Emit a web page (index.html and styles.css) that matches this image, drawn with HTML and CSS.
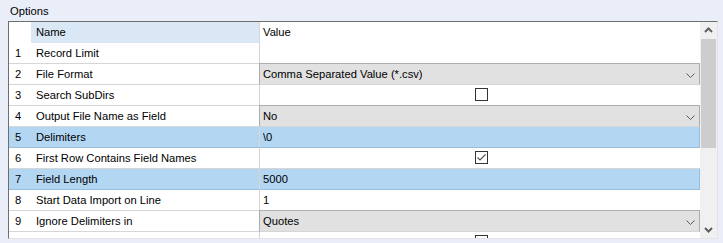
FILE: index.html
```html
<!DOCTYPE html>
<html lang="en">
<head>
    <meta charset="UTF-8">
    <title>Options</title>
    <link rel="stylesheet" href="styles.css">
</head>
<body>
<div class="panel">
    <div class="caption">Options</div>
    <div class="grid-box">
        <div class="grid">
            <div class="row head">
                <div class="num"></div>
                <div class="name">Name</div>
                <div class="value">Value</div>
            </div>
            <div class="row">
                <div class="num">1</div>
                <div class="name">Record Limit</div>
                <div class="value"></div>
            </div>
            <div class="row">
                <div class="num">2</div>
                <div class="name">File Format</div>
                <div class="value combo">Comma Separated Value (*.csv)<svg class="chev" width="9" height="5" viewBox="0 0 9 5"><polyline points="0.5,0.5 4.5,4.5 8.5,0.5" fill="none" stroke="#5a5a5a" stroke-width="1"/></svg></div>
            </div>
            <div class="row">
                <div class="num">3</div>
                <div class="name">Search SubDirs</div>
                <div class="value check"><span class="box"></span></div>
            </div>
            <div class="row">
                <div class="num">4</div>
                <div class="name">Output File Name as Field</div>
                <div class="value combo">No<svg class="chev" width="9" height="5" viewBox="0 0 9 5"><polyline points="0.5,0.5 4.5,4.5 8.5,0.5" fill="none" stroke="#5a5a5a" stroke-width="1"/></svg></div>
            </div>
            <div class="row sel">
                <div class="num">5</div>
                <div class="name">Delimiters</div>
                <div class="value">\0</div>
            </div>
            <div class="row">
                <div class="num">6</div>
                <div class="name">First Row Contains Field Names</div>
                <div class="value check"><span class="box"><svg class="tick" width="11" height="11" viewBox="0 0 11 11"><polyline points="1.5,5.5 4,8 9.5,2.5" fill="none" stroke="#555" stroke-width="1.2"/></svg></span></div>
            </div>
            <div class="row sel">
                <div class="num">7</div>
                <div class="name">Field Length</div>
                <div class="value">5000</div>
            </div>
            <div class="row">
                <div class="num">8</div>
                <div class="name">Start Data Import on Line</div>
                <div class="value">1</div>
            </div>
            <div class="row">
                <div class="num">9</div>
                <div class="name">Ignore Delimiters in</div>
                <div class="value combo">Quotes<svg class="chev" width="9" height="5" viewBox="0 0 9 5"><polyline points="0.5,0.5 4.5,4.5 8.5,0.5" fill="none" stroke="#5a5a5a" stroke-width="1"/></svg></div>
            </div>
            <div class="row">
                <div class="num">10</div>
                <div class="name">Treat Read Errors as Warnings</div>
                <div class="value check"><span class="box"></span></div>
            </div>
        </div>
        <div class="scrollbar">
            <div class="sb-btn"><svg width="17" height="17" viewBox="0 0 17 17"><polyline points="5,10 8.5,6.5 12,10" fill="none" stroke="#606060" stroke-width="2"/></svg></div>
            <div class="sb-track"><div class="sb-thumb"></div></div>
            <div class="sb-btn"><svg width="17" height="17" viewBox="0 0 17 17"><polyline points="5,7 8.5,10.5 12,7" fill="none" stroke="#606060" stroke-width="2"/></svg></div>
        </div>
    </div>
</div>
</body>
</html>
```

FILE: styles.css
```css
*{
    margin: 0;
    padding: 0;
    box-sizing: border-box;
}
body{
    background: #eaeef8;
    font-family: "Liberation Sans", Arial, sans-serif;
    font-size: 11.2px;
    color: #000;
}
.panel{
    padding: 4px 5px 0 8px;
}
.caption{
    height: 17px;
    line-height: 14px;
    padding-left: 2px;
}
.grid-box{
    width: 710px;
    height: 218px;
    border-top: 1px solid #6e6e6e;
    border-left: 1px solid #6e6e6e;
    border-right: 1px solid #e3e3e3;
    border-bottom: 1px solid #e3e3e3;
    background: #fff;
    display: flex;
    overflow: hidden;
}
.grid{
    width: 691px;
    display: flex;
    flex-direction: column;
}
.row{
    display: grid;
    grid-template-columns: 22px 228px 441px;
    flex: none;
}
.row > div{
    height: 21px;
    line-height: 20px;
    border-bottom: 1px solid #d6d6d6;
    white-space: nowrap;
    overflow: hidden;
}
.num{
    padding-left: 6px;
}
.name{
    padding-left: 5px;
}
.value{
    border-left: 1px solid #d6d6d6;
    padding-left: 3px;
    position: relative;
}
.head > div{
    border-bottom: none;
    line-height: 21px;
}
.head .name{
    background: #dae8f5;
}
.sel > div{
    background: #b3d7f3;
    border-bottom-color: #99bddf;
}
.sel .value{
    border-right: 1px solid #99bddf;
}
.combo{
    background: #e1e1e1;
    border: 1px solid #adadad;
    height: 22px !important;
    margin-top: -1px;
    line-height: 21px !important;
    padding-left: 3px;
}
.chev{
    position: absolute;
    right: 4px;
    top: 9px;
}
.check{
    display: flex;
    justify-content: center;
    align-items: center;
    padding-left: 0;
}
.box{
    width: 13px;
    height: 13px;
    border: 1px solid #333;
    background: #fff;
    margin-left: 2px;
    margin-bottom: 1px;
    display: flex;
}
.scrollbar{
    width: 17px;
    background: #f0f0f0;
    display: flex;
    flex-direction: column;
}
.sb-btn{
    height: 17px;
    flex: none;
    display: flex;
}
.sb-track{
    flex: 1;
    padding: 0 1px;
}
.sb-thumb{
    height: 109px;
    background: #cdcdcd;
}
```
